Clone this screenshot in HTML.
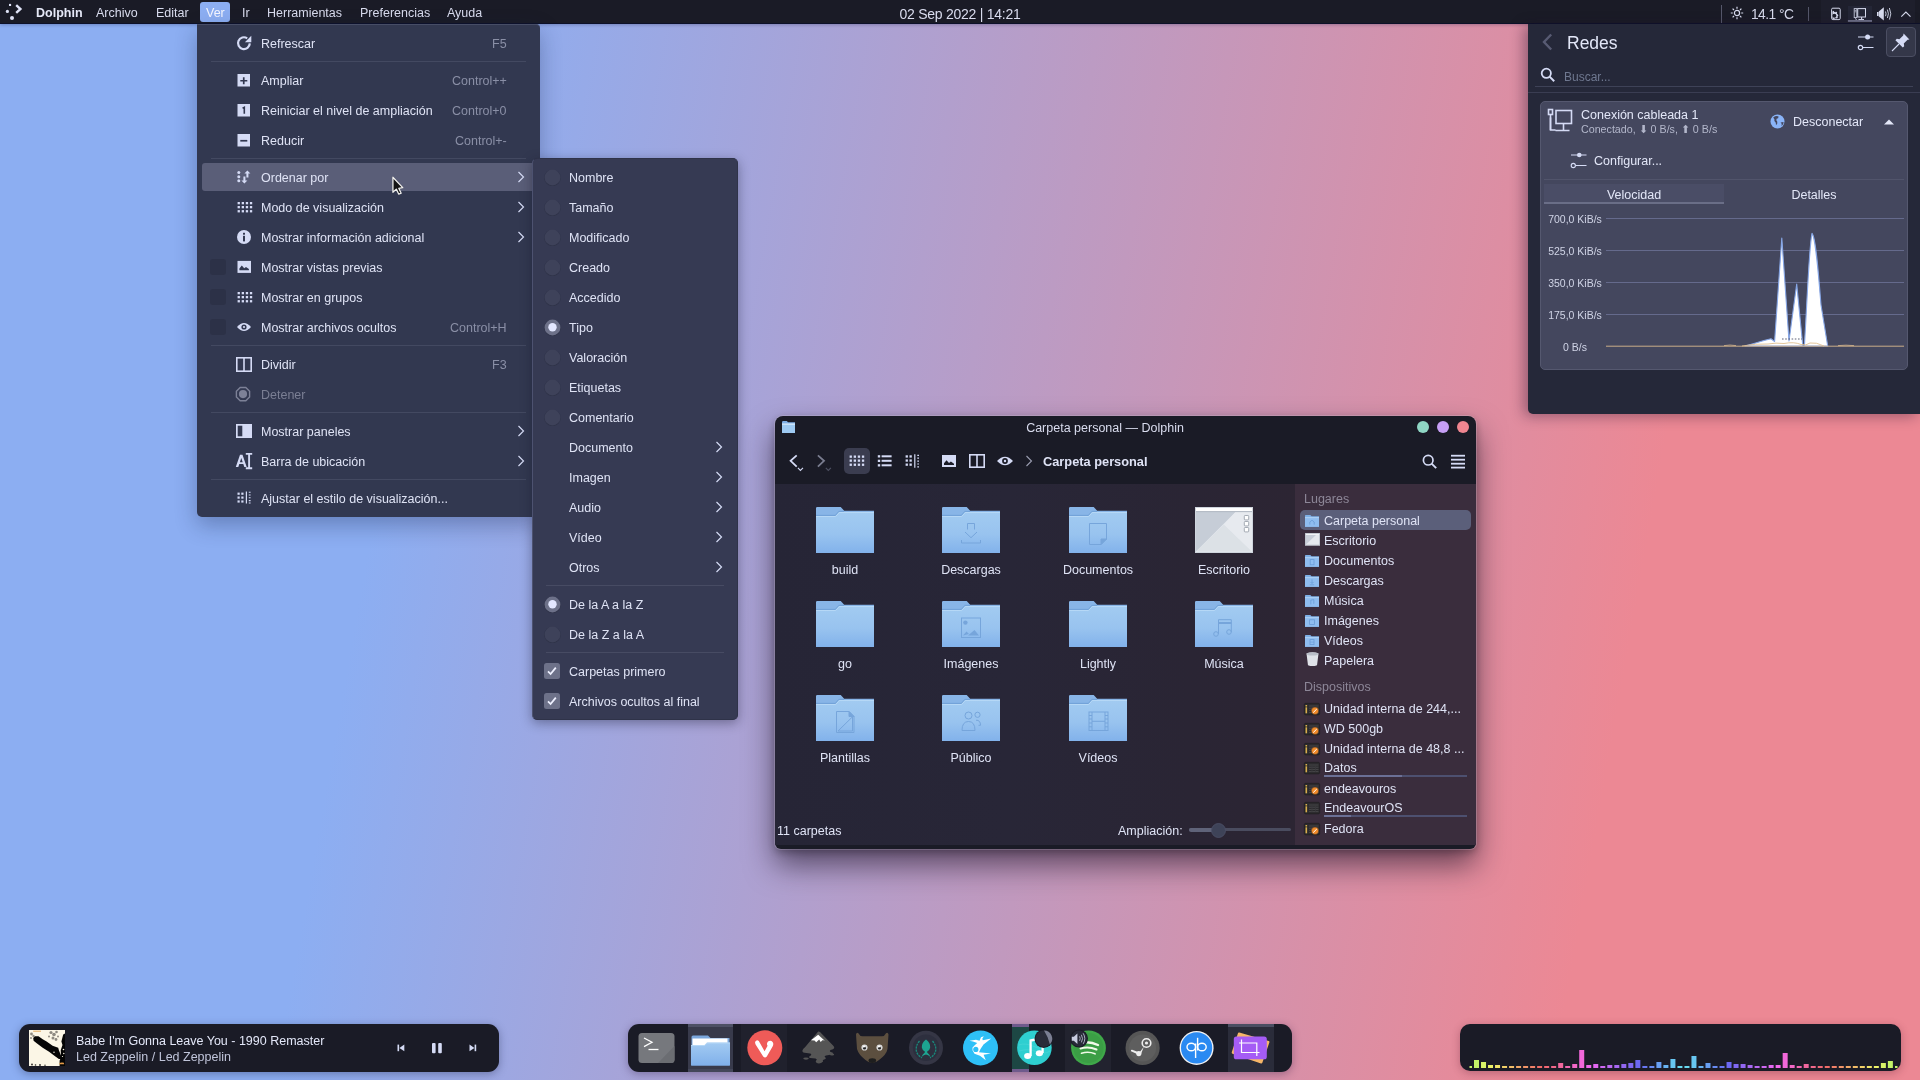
<!DOCTYPE html>
<html><head><meta charset="utf-8"><style>
html,body{margin:0;padding:0;width:1920px;height:1080px;overflow:hidden;}
body{position:relative;font-family:"Liberation Sans", sans-serif;background:linear-gradient(100deg,#8caef2 22%,#ec8894 82.6%);}
.t{position:absolute;white-space:nowrap;will-change:transform;}
svg{display:block;overflow:visible;}
</style></head><body>
<div style="position:absolute;left:0px;top:0px;width:1920px;height:23px;background:#1a1b26;border-bottom:1px solid #0d1129;box-shadow:0 1px 3px rgba(10,15,50,0.25);"></div>
<svg style="position:absolute;left:0px;top:0px;" width="26" height="24" viewBox="0 0 26 24">
<rect x="9" y="3.9" width="2.1" height="2.1" fill="#dfe3f7"/>
<circle cx="7.4" cy="11.4" r="1.6" fill="#dfe3f7"/>
<circle cx="12" cy="18" r="2" fill="#dfe3f7"/>
<path d="M16.2 5.2 L20.4 9 L16.2 12.8" fill="none" stroke="#dfe3f7" stroke-width="2.4" stroke-linejoin="miter"/>
</svg>
<div class="t" style="left:35.50px;top:7.12px;font-size:12.5px;line-height:12.5px;color:#e6e9f8;font-weight:700;">Dolphin</div>
<div class="t" style="left:96.00px;top:7.12px;font-size:12.5px;line-height:12.5px;color:#d9dcee;">Archivo</div>
<div class="t" style="left:155.50px;top:7.12px;font-size:12.5px;line-height:12.5px;color:#d9dcee;">Editar</div>
<div style="position:absolute;left:200px;top:2px;width:30px;height:20px;background:#8caef2;border-radius:3px;"></div>
<div class="t" style="left:205.50px;top:7.12px;font-size:12.5px;line-height:12.5px;color:#f4f6ff;">Ver</div>
<div class="t" style="left:241.50px;top:7.12px;font-size:12.5px;line-height:12.5px;color:#d9dcee;">Ir</div>
<div class="t" style="left:266.50px;top:7.12px;font-size:12.5px;line-height:12.5px;color:#d9dcee;">Herramientas</div>
<div class="t" style="left:360.00px;top:7.12px;font-size:12.5px;line-height:12.5px;color:#d9dcee;">Preferencias</div>
<div class="t" style="left:446.50px;top:7.12px;font-size:12.5px;line-height:12.5px;color:#d9dcee;">Ayuda</div>
<div class="t" style="left:959.50px;transform:translateX(-50%);top:7.15px;font-size:14px;line-height:14px;color:#d9dcee;letter-spacing:-0.25px;">02 Sep 2022 | 14:21</div>
<div style="position:absolute;left:1721px;top:5px;width:1px;height:18px;background:#55576a;"></div>
<svg style="position:absolute;left:1730px;top:6px;" width="14" height="14" viewBox="0 0 14 14"><g stroke="#d8dcef" stroke-width="1.2" fill="none"><circle cx="7" cy="7" r="2.6"/>
<path d="M7 0.8v2M7 11.2v2M0.8 7h2M11.2 7h2M2.6 2.6l1.4 1.4M10 10l1.4 1.4M2.6 11.4l1.4-1.4M10 4l1.4-1.4"/></g></svg>
<div class="t" style="left:1751.00px;top:8.12px;font-size:13.8px;line-height:13.8px;color:#d9dcee;letter-spacing:-0.55px;">14.1 °C</div>
<div style="position:absolute;left:1808px;top:7px;width:1px;height:14px;background:#55576a;"></div>
<div style="position:absolute;left:1821px;top:0px;width:94px;height:23px;background:#1e1f2c;"></div>
<svg style="position:absolute;left:1820px;top:0px;" width="100" height="24" viewBox="0 0 100 24"><rect x="11.6" y="8.2" width="8.6" height="11.4" rx="1.2" fill="none" stroke="#d8dcef" stroke-width="1"/>
<path d="M12.4 11.5 L13.6 10.8 L14.4 12 L15.6 12.2 L16 11.4 L17.2 12.6 L16.8 13.6 L17.8 14.6 L18.4 15.6 L17.6 16.6 L17.8 18 L16.6 18.6 L15.4 18.2 L14 19 L12.4 19 Z" fill="#d8dcef"/><circle cx="14.4" cy="15.8" r="2" fill="#1c1d29"/>
<rect x="27.9" y="6" width="24.1" height="15.9" fill="#242636"/>
<rect x="27.9" y="20" width="24.1" height="1.9" fill="#6d7088"/>
<rect x="37.7" y="8.6" width="7.8" height="8.4" fill="none" stroke="#d8dcef" stroke-width="1"/>
<rect x="34.2" y="8.6" width="2.6" height="9" fill="none" stroke="#c8ccdf" stroke-width="0.9"/><path d="M34.8 10.4h1.4M34.8 11.8h1.4" stroke="#c8ccdf" stroke-width="0.7"/>
<path d="M41.6 17 V19 M38.5 19.5 H44" stroke="#d8dcef" stroke-width="1.2"/><path d="M35.5 17.6 V19.2 L37 19.5" stroke="#aeb2c6" stroke-width="0.9" fill="none"/>
<path d="M57 12 H58.6 V16 H57Z" fill="#d8dcef"/><path d="M58.8 11.6 L63.8 7.2 V20.6 L58.8 16.4Z" fill="#d8dcef"/>
<path d="M65.5 11.5 Q66.6 13.8 65.5 16.2 M67.4 9.6 Q69.4 13.8 67.4 18 M69.4 8 Q72.2 13.8 69.4 19.6" fill="none" stroke="#d8dcef" stroke-width="0.9"/>
<path d="M81.3 16.7 L85.9 12.1 L90.5 16.7" fill="none" stroke="#d8dcef" stroke-width="1.1"/>
</svg>
<div style="position:absolute;left:197px;top:24px;width:343px;height:493px;background:#323850;border-radius:0 4px 5px 5px;box-shadow:0 8px 22px rgba(20,30,70,0.32);border-top:1px solid #474d66;box-sizing:border-box;"></div>
<svg style="position:absolute;left:237px;top:36px;" width="16" height="15" viewBox="0 0 16 15"><path d="M12.8 7.4 A5.9 5.9 0 1 1 10.2 2.3" fill="none" stroke="#d5dbf5" stroke-width="2.2"/><path d="M14.3 -0.2 L14.3 6.2 L7.9 6.2Z" fill="#d5dbf5"/></svg>
<div class="t" style="left:261.00px;top:37.82px;font-size:12.5px;line-height:12.5px;color:#dfe3f5;">Refrescar</div>
<div class="t" style="right:1413.50px;top:37.82px;font-size:12.5px;line-height:12.5px;color:#8a8fa6;">F5</div>
<div style="position:absolute;left:211px;top:61px;width:315px;height:1px;background:#434961;"></div>
<svg style="position:absolute;left:237px;top:73px;" width="16" height="15" viewBox="0 0 16 15"><rect x="0.5" y="1" width="12.5" height="12.5" fill="#d5dbf5"/><path d="M6.75 4.2v7M3.3 7.75h7" stroke="#323850" stroke-width="1.7"/></svg>
<div class="t" style="left:261.00px;top:74.82px;font-size:12.5px;line-height:12.5px;color:#dfe3f5;">Ampliar</div>
<div class="t" style="right:1413.50px;top:74.82px;font-size:12.5px;line-height:12.5px;color:#8a8fa6;">Control++</div>
<svg style="position:absolute;left:237px;top:103px;" width="16" height="15" viewBox="0 0 16 15"><rect x="0.5" y="1" width="12.5" height="12.5" fill="#d5dbf5"/><path d="M5.6 5.2 L7.3 4.3 L7.3 10.8" fill="none" stroke="#323850" stroke-width="1.6"/></svg>
<div class="t" style="left:261.00px;top:104.82px;font-size:12.5px;line-height:12.5px;color:#dfe3f5;">Reiniciar el nivel de ampliación</div>
<div class="t" style="right:1413.50px;top:104.82px;font-size:12.5px;line-height:12.5px;color:#8a8fa6;">Control+0</div>
<svg style="position:absolute;left:237px;top:133px;" width="16" height="15" viewBox="0 0 16 15"><rect x="0.5" y="1" width="12.5" height="12.5" fill="#d5dbf5"/><path d="M3.3 7.75h7" stroke="#323850" stroke-width="1.7"/></svg>
<div class="t" style="left:261.00px;top:134.82px;font-size:12.5px;line-height:12.5px;color:#dfe3f5;">Reducir</div>
<div class="t" style="right:1413.50px;top:134.82px;font-size:12.5px;line-height:12.5px;color:#8a8fa6;">Control+-</div>
<div style="position:absolute;left:211px;top:158px;width:315px;height:1px;background:#434961;"></div>
<div style="position:absolute;left:202px;top:163px;width:335px;height:28px;background:#5a5e78;border-radius:3px;"></div>
<svg style="position:absolute;left:237px;top:170px;" width="16" height="15" viewBox="0 0 16 15"><circle cx="1.8" cy="2.6" r="1.5" fill="#d5dbf5"/><circle cx="1.8" cy="6.7" r="1.5" fill="#d5dbf5"/><circle cx="1.8" cy="10.8" r="1.5" fill="#d5dbf5"/><path d="M10.4 0.4 L13.4 3.6 L11.4 3.6 L11.4 7.4 L9.4 7.4 L9.4 3.6 L7.4 3.6Z" fill="#d5dbf5"/><path d="M7.4 13.6 L4.4 10.4 L6.4 10.4 L6.4 6.6 L8.4 6.6 L8.4 10.4 L10.4 10.4Z" fill="#d5dbf5"/></svg>
<div class="t" style="left:261.00px;top:171.82px;font-size:12.5px;line-height:12.5px;color:#dfe3f5;">Ordenar por</div>
<svg style="position:absolute;left:517px;top:171px;" width="8" height="12" viewBox="0 0 8 12"><path d="M1.5 1 L6.5 6 L1.5 11" fill="none" stroke="#d5dbf5" stroke-width="1.2"/></svg>
<svg style="position:absolute;left:237px;top:200px;" width="16" height="15" viewBox="0 0 16 15"><rect x="0.6" y="2.0" width="2.3" height="2.3" fill="#d5dbf5"/><rect x="0.6" y="6.0" width="2.3" height="2.3" fill="#d5dbf5"/><rect x="0.6" y="10.1" width="2.3" height="2.3" fill="#d5dbf5"/><rect x="4.7" y="2.0" width="2.3" height="2.3" fill="#d5dbf5"/><rect x="4.7" y="6.0" width="2.3" height="2.3" fill="#d5dbf5"/><rect x="4.7" y="10.1" width="2.3" height="2.3" fill="#d5dbf5"/><rect x="8.8" y="2.0" width="2.3" height="2.3" fill="#d5dbf5"/><rect x="8.8" y="6.0" width="2.3" height="2.3" fill="#d5dbf5"/><rect x="8.8" y="10.1" width="2.3" height="2.3" fill="#d5dbf5"/><rect x="12.9" y="2.0" width="2.3" height="2.3" fill="#d5dbf5"/><rect x="12.9" y="6.0" width="2.3" height="2.3" fill="#d5dbf5"/><rect x="12.9" y="10.1" width="2.3" height="2.3" fill="#d5dbf5"/></svg>
<div class="t" style="left:261.00px;top:201.82px;font-size:12.5px;line-height:12.5px;color:#dfe3f5;">Modo de visualización</div>
<svg style="position:absolute;left:517px;top:201px;" width="8" height="12" viewBox="0 0 8 12"><path d="M1.5 1 L6.5 6 L1.5 11" fill="none" stroke="#d5dbf5" stroke-width="1.2"/></svg>
<svg style="position:absolute;left:237px;top:230px;" width="16" height="15" viewBox="0 0 16 15"><circle cx="7" cy="7" r="7" fill="#d5dbf5"/><rect x="6" y="5.8" width="2" height="5.6" fill="#323850"/><rect x="6" y="2.8" width="2" height="1.9" fill="#323850"/></svg>
<div class="t" style="left:261.00px;top:231.82px;font-size:12.5px;line-height:12.5px;color:#dfe3f5;">Mostrar información adicional</div>
<svg style="position:absolute;left:517px;top:231px;" width="8" height="12" viewBox="0 0 8 12"><path d="M1.5 1 L6.5 6 L1.5 11" fill="none" stroke="#d5dbf5" stroke-width="1.2"/></svg>
<div style="position:absolute;left:210px;top:259px;width:16px;height:16px;background:#2c3147;border-radius:3px;"></div>
<svg style="position:absolute;left:237px;top:260px;" width="16" height="15" viewBox="0 0 16 15"><rect x="0.5" y="0.9" width="13.5" height="12" fill="#d5dbf5"/><path d="M2.4 10.3 L2.4 8.4 L4.8 5.6 L7.2 8.2 L9 6.9 L11.9 9.1 L11.9 10.3Z" fill="#323850"/></svg>
<div class="t" style="left:261.00px;top:261.82px;font-size:12.5px;line-height:12.5px;color:#dfe3f5;">Mostrar vistas previas</div>
<div style="position:absolute;left:210px;top:289px;width:16px;height:16px;background:#2c3147;border-radius:3px;"></div>
<svg style="position:absolute;left:237px;top:290px;" width="16" height="15" viewBox="0 0 16 15"><rect x="0.6" y="2.0" width="2.3" height="2.3" fill="#d5dbf5"/><rect x="0.6" y="6.0" width="2.3" height="2.3" fill="#d5dbf5"/><rect x="0.6" y="10.1" width="2.3" height="2.3" fill="#d5dbf5"/><rect x="4.7" y="2.0" width="2.3" height="2.3" fill="#d5dbf5"/><rect x="4.7" y="6.0" width="2.3" height="2.3" fill="#d5dbf5"/><rect x="4.7" y="10.1" width="2.3" height="2.3" fill="#d5dbf5"/><rect x="8.8" y="2.0" width="2.3" height="2.3" fill="#d5dbf5"/><rect x="8.8" y="6.0" width="2.3" height="2.3" fill="#d5dbf5"/><rect x="8.8" y="10.1" width="2.3" height="2.3" fill="#d5dbf5"/><rect x="12.9" y="2.0" width="2.3" height="2.3" fill="#d5dbf5"/><rect x="12.9" y="6.0" width="2.3" height="2.3" fill="#d5dbf5"/><rect x="12.9" y="10.1" width="2.3" height="2.3" fill="#d5dbf5"/></svg>
<div class="t" style="left:261.00px;top:291.82px;font-size:12.5px;line-height:12.5px;color:#dfe3f5;">Mostrar en grupos</div>
<div style="position:absolute;left:210px;top:319px;width:16px;height:16px;background:#2c3147;border-radius:3px;"></div>
<svg style="position:absolute;left:237px;top:320px;" width="16" height="15" viewBox="0 0 16 15"><path d="M0 7 Q7 -1 14 7 Q7 15 0 7Z" fill="#d5dbf5"/><circle cx="7" cy="7" r="2.6" fill="#323850"/><circle cx="7" cy="7" r="1.1" fill="#d5dbf5"/></svg>
<div class="t" style="left:261.00px;top:321.82px;font-size:12.5px;line-height:12.5px;color:#dfe3f5;">Mostrar archivos ocultos</div>
<div class="t" style="right:1413.50px;top:321.82px;font-size:12.5px;line-height:12.5px;color:#8a8fa6;">Control+H</div>
<div style="position:absolute;left:211px;top:345px;width:315px;height:1px;background:#434961;"></div>
<svg style="position:absolute;left:236px;top:357px;" width="16" height="15" viewBox="0 0 16 15"><rect x="0.8" y="0.8" width="14.4" height="13.4" fill="none" stroke="#d5dbf5" stroke-width="1.6"/><path d="M8 0.8v13.4" stroke="#d5dbf5" stroke-width="1.6"/></svg>
<div class="t" style="left:261.00px;top:358.82px;font-size:12.5px;line-height:12.5px;color:#dfe3f5;">Dividir</div>
<div class="t" style="right:1413.50px;top:358.82px;font-size:12.5px;line-height:12.5px;color:#8a8fa6;">F3</div>
<svg style="position:absolute;left:236px;top:387px;" width="16" height="15" viewBox="0 0 16 15"><path d="M4.2 0.5h5.6l3.8 3.8v5.6l-3.8 3.8H4.2L0.4 9.9V4.3Z" fill="none" stroke="#7d8197" stroke-width="1.4"/><circle cx="7" cy="7.1" r="4.1" fill="#7d8197"/></svg>
<div class="t" style="left:261.00px;top:388.82px;font-size:12.5px;line-height:12.5px;color:#7b7f94;">Detener</div>
<div style="position:absolute;left:211px;top:412px;width:315px;height:1px;background:#434961;"></div>
<svg style="position:absolute;left:236px;top:424px;" width="16" height="15" viewBox="0 0 16 15"><rect x="0" y="0" width="16" height="14" fill="#d5dbf5"/><rect x="1.7" y="1.7" width="4.6" height="10.6" fill="#323850"/></svg>
<div class="t" style="left:261.00px;top:425.82px;font-size:12.5px;line-height:12.5px;color:#dfe3f5;">Mostrar paneles</div>
<svg style="position:absolute;left:517px;top:425px;" width="8" height="12" viewBox="0 0 8 12"><path d="M1.5 1 L6.5 6 L1.5 11" fill="none" stroke="#d5dbf5" stroke-width="1.2"/></svg>
<svg style="position:absolute;left:236px;top:454px;" width="16" height="15" viewBox="0 0 16 15"><path d="M-0.2 13 L4 0.8 H6.5 L10.7 13 H8.3 L7.3 10.1 H3.3 L2.3 13Z M3.9 8.2 H6.7 L5.3 4.1Z" fill="#d5dbf5" fill-rule="evenodd"/><path d="M9.8 -0.1h6.4M13.1 -0.1v14.3M9.8 14.2h6.4" stroke="#d5dbf5" stroke-width="1.9" fill="none"/></svg>
<div class="t" style="left:261.00px;top:455.82px;font-size:12.5px;line-height:12.5px;color:#dfe3f5;">Barra de ubicación</div>
<svg style="position:absolute;left:517px;top:455px;" width="8" height="12" viewBox="0 0 8 12"><path d="M1.5 1 L6.5 6 L1.5 11" fill="none" stroke="#d5dbf5" stroke-width="1.2"/></svg>
<div style="position:absolute;left:211px;top:479px;width:315px;height:1px;background:#434961;"></div>
<svg style="position:absolute;left:237px;top:491px;" width="16" height="15" viewBox="0 0 16 15"><rect x="0.5" y="1.6" width="2.2" height="2.2" fill="#d5dbf5"/><rect x="0.5" y="5.5" width="2.2" height="2.2" fill="#d5dbf5"/><rect x="0.5" y="9.4" width="2.2" height="2.2" fill="#d5dbf5"/><rect x="4.3" y="1.6" width="2.2" height="2.2" fill="#d5dbf5"/><rect x="4.3" y="5.5" width="2.2" height="2.2" fill="#d5dbf5"/><rect x="4.3" y="9.4" width="2.2" height="2.2" fill="#d5dbf5"/><path d="M9.4 0.6v12" stroke="#d5dbf5" stroke-width="1.2"/><path d="M11.8 1.2h1.8M11.8 4h1.8M11.8 6.8h1.8M11.8 9.6h1.8M11.8 12h1.8" stroke="#d5dbf5" stroke-width="1.1"/></svg>
<div class="t" style="left:261.00px;top:492.82px;font-size:12.5px;line-height:12.5px;color:#dfe3f5;">Ajustar el estilo de visualización...</div>
<svg style="position:absolute;left:391px;top:176px;" width="14" height="20" viewBox="0 0 14 20"><path d="M1.9 1.3 L1.9 16.3 L5.3 13.1 L7.8 18.2 L10.2 17.2 L7.8 12.3 L11.8 11.6 Z" fill="#151515" stroke="#f2f2f2" stroke-width="1.3" stroke-linejoin="round" style="filter:drop-shadow(0 0.5px 0.6px rgba(0,0,0,0.5))"/></svg>
<div style="position:absolute;left:532px;top:158px;width:206px;height:562px;background:#363a53;border-radius:5px;box-shadow:0 3px 12px rgba(20,20,40,0.4);border:1px solid #2f3349;border-left-color:#4d5270;box-sizing:border-box;"></div>
<svg style="position:absolute;left:543px;top:168px;" width="19" height="19" viewBox="0 0 19 19"><circle cx="9.5" cy="9.9" r="8.2" fill="#2a2d40" opacity="0.6"/><circle cx="9.5" cy="9.5" r="7.9" fill="#3e425a"/></svg>
<div class="t" style="left:569.00px;top:171.82px;font-size:12.5px;line-height:12.5px;color:#dfe3f5;">Nombre</div>
<svg style="position:absolute;left:543px;top:198px;" width="19" height="19" viewBox="0 0 19 19"><circle cx="9.5" cy="9.9" r="8.2" fill="#2a2d40" opacity="0.6"/><circle cx="9.5" cy="9.5" r="7.9" fill="#3e425a"/></svg>
<div class="t" style="left:569.00px;top:201.82px;font-size:12.5px;line-height:12.5px;color:#dfe3f5;">Tamaño</div>
<svg style="position:absolute;left:543px;top:228px;" width="19" height="19" viewBox="0 0 19 19"><circle cx="9.5" cy="9.9" r="8.2" fill="#2a2d40" opacity="0.6"/><circle cx="9.5" cy="9.5" r="7.9" fill="#3e425a"/></svg>
<div class="t" style="left:569.00px;top:231.82px;font-size:12.5px;line-height:12.5px;color:#dfe3f5;">Modificado</div>
<svg style="position:absolute;left:543px;top:258px;" width="19" height="19" viewBox="0 0 19 19"><circle cx="9.5" cy="9.9" r="8.2" fill="#2a2d40" opacity="0.6"/><circle cx="9.5" cy="9.5" r="7.9" fill="#3e425a"/></svg>
<div class="t" style="left:569.00px;top:261.82px;font-size:12.5px;line-height:12.5px;color:#dfe3f5;">Creado</div>
<svg style="position:absolute;left:543px;top:288px;" width="19" height="19" viewBox="0 0 19 19"><circle cx="9.5" cy="9.9" r="8.2" fill="#2a2d40" opacity="0.6"/><circle cx="9.5" cy="9.5" r="7.9" fill="#3e425a"/></svg>
<div class="t" style="left:569.00px;top:291.82px;font-size:12.5px;line-height:12.5px;color:#dfe3f5;">Accedido</div>
<svg style="position:absolute;left:543px;top:318px;" width="19" height="19" viewBox="0 0 19 19"><circle cx="9.5" cy="9.9" r="8.2" fill="#2a2d40" opacity="0.6"/><circle cx="9.5" cy="9.5" r="7.9" fill="#6d7189"/><circle cx="9.5" cy="9.3" r="4.2" fill="#e3e7ff"/></svg>
<div class="t" style="left:569.00px;top:321.82px;font-size:12.5px;line-height:12.5px;color:#dfe3f5;">Tipo</div>
<svg style="position:absolute;left:543px;top:348px;" width="19" height="19" viewBox="0 0 19 19"><circle cx="9.5" cy="9.9" r="8.2" fill="#2a2d40" opacity="0.6"/><circle cx="9.5" cy="9.5" r="7.9" fill="#3e425a"/></svg>
<div class="t" style="left:569.00px;top:351.82px;font-size:12.5px;line-height:12.5px;color:#dfe3f5;">Valoración</div>
<svg style="position:absolute;left:543px;top:378px;" width="19" height="19" viewBox="0 0 19 19"><circle cx="9.5" cy="9.9" r="8.2" fill="#2a2d40" opacity="0.6"/><circle cx="9.5" cy="9.5" r="7.9" fill="#3e425a"/></svg>
<div class="t" style="left:569.00px;top:381.82px;font-size:12.5px;line-height:12.5px;color:#dfe3f5;">Etiquetas</div>
<svg style="position:absolute;left:543px;top:408px;" width="19" height="19" viewBox="0 0 19 19"><circle cx="9.5" cy="9.9" r="8.2" fill="#2a2d40" opacity="0.6"/><circle cx="9.5" cy="9.5" r="7.9" fill="#3e425a"/></svg>
<div class="t" style="left:569.00px;top:411.82px;font-size:12.5px;line-height:12.5px;color:#dfe3f5;">Comentario</div>
<div class="t" style="left:569.00px;top:441.82px;font-size:12.5px;line-height:12.5px;color:#dfe3f5;">Documento</div>
<svg style="position:absolute;left:715px;top:441px;" width="8" height="12" viewBox="0 0 8 12"><path d="M1.5 1 L6.5 6 L1.5 11" fill="none" stroke="#d5dbf5" stroke-width="1.2"/></svg>
<div class="t" style="left:569.00px;top:471.82px;font-size:12.5px;line-height:12.5px;color:#dfe3f5;">Imagen</div>
<svg style="position:absolute;left:715px;top:471px;" width="8" height="12" viewBox="0 0 8 12"><path d="M1.5 1 L6.5 6 L1.5 11" fill="none" stroke="#d5dbf5" stroke-width="1.2"/></svg>
<div class="t" style="left:569.00px;top:501.82px;font-size:12.5px;line-height:12.5px;color:#dfe3f5;">Audio</div>
<svg style="position:absolute;left:715px;top:501px;" width="8" height="12" viewBox="0 0 8 12"><path d="M1.5 1 L6.5 6 L1.5 11" fill="none" stroke="#d5dbf5" stroke-width="1.2"/></svg>
<div class="t" style="left:569.00px;top:531.82px;font-size:12.5px;line-height:12.5px;color:#dfe3f5;">Vídeo</div>
<svg style="position:absolute;left:715px;top:531px;" width="8" height="12" viewBox="0 0 8 12"><path d="M1.5 1 L6.5 6 L1.5 11" fill="none" stroke="#d5dbf5" stroke-width="1.2"/></svg>
<div class="t" style="left:569.00px;top:561.82px;font-size:12.5px;line-height:12.5px;color:#dfe3f5;">Otros</div>
<svg style="position:absolute;left:715px;top:561px;" width="8" height="12" viewBox="0 0 8 12"><path d="M1.5 1 L6.5 6 L1.5 11" fill="none" stroke="#d5dbf5" stroke-width="1.2"/></svg>
<div style="position:absolute;left:546px;top:585px;width:178px;height:1px;background:#474b63;"></div>
<svg style="position:absolute;left:543px;top:595px;" width="19" height="19" viewBox="0 0 19 19"><circle cx="9.5" cy="9.9" r="8.2" fill="#2a2d40" opacity="0.6"/><circle cx="9.5" cy="9.5" r="7.9" fill="#6d7189"/><circle cx="9.5" cy="9.3" r="4.2" fill="#e3e7ff"/></svg>
<div class="t" style="left:569.00px;top:598.82px;font-size:12.5px;line-height:12.5px;color:#dfe3f5;">De la A a la Z</div>
<svg style="position:absolute;left:543px;top:625px;" width="19" height="19" viewBox="0 0 19 19"><circle cx="9.5" cy="9.9" r="8.2" fill="#2a2d40" opacity="0.6"/><circle cx="9.5" cy="9.5" r="7.9" fill="#3e425a"/></svg>
<div class="t" style="left:569.00px;top:628.82px;font-size:12.5px;line-height:12.5px;color:#dfe3f5;">De la Z a la A</div>
<div style="position:absolute;left:546px;top:652px;width:178px;height:1px;background:#474b63;"></div>
<svg style="position:absolute;left:544px;top:663px;" width="16" height="16" viewBox="0 0 16 16"><rect x="0" y="0" width="16" height="16" rx="2.5" fill="#6d7189"/><path d="M4 8.3 L6.6 11 L11.8 4.6" fill="none" stroke="#eef0ff" stroke-width="1.8"/></svg>
<div class="t" style="left:569.00px;top:665.82px;font-size:12.5px;line-height:12.5px;color:#dfe3f5;">Carpetas primero</div>
<svg style="position:absolute;left:544px;top:693px;" width="16" height="16" viewBox="0 0 16 16"><rect x="0" y="0" width="16" height="16" rx="2.5" fill="#6d7189"/><path d="M4 8.3 L6.6 11 L11.8 4.6" fill="none" stroke="#eef0ff" stroke-width="1.8"/></svg>
<div class="t" style="left:569.00px;top:695.82px;font-size:12.5px;line-height:12.5px;color:#dfe3f5;">Archivos ocultos al final</div>
<div style="position:absolute;left:775px;top:416px;width:701px;height:433px;background:#1a1b26;border-radius:8px 8px 6px 6px;box-shadow:0 0 0 1px rgba(230,220,240,0.22),0 16px 30px rgba(25,15,35,0.6),0 3px 8px rgba(0,0,0,0.3);overflow:hidden;"><div style="position:absolute;left:0;top:68px;width:520px;height:361px;background:linear-gradient(90deg,#262536 0%,#282637 45%,#2a2534 80%,#2c2533 100%);"></div><div style="position:absolute;left:520px;top:68px;width:181px;height:361px;background:#3a2d3d;"></div></div>
<svg style="position:absolute;left:782px;top:421px;" width="13" height="12" viewBox="0 0 13 12"><path d="M0 1.2 Q0 0 1.2 0 H4.8 L6 1.3 H13 V12 H0Z" fill="#7fb0e6"/><rect x="0" y="2.6" width="13" height="9.4" fill="#9ecaf2"/><rect x="0" y="2.6" width="13" height="1" fill="#e8f2fc"/></svg>
<div class="t" style="left:1105.00px;transform:translateX(-50%);top:422.22px;font-size:12.5px;line-height:12.5px;color:#d9dcee;">Carpeta personal — Dolphin</div>
<svg style="position:absolute;left:1417px;top:421px;" width="12" height="12" viewBox="0 0 12 12"><circle cx="6" cy="6" r="6" fill="#8fd6c4"/></svg>
<svg style="position:absolute;left:1437px;top:421px;" width="12" height="12" viewBox="0 0 12 12"><circle cx="6" cy="6" r="6" fill="#c69ff5"/></svg>
<svg style="position:absolute;left:1457px;top:421px;" width="12" height="12" viewBox="0 0 12 12"><circle cx="6" cy="6" r="6" fill="#ef8590"/></svg>
<svg style="position:absolute;left:786px;top:452px;" width="20" height="21" viewBox="0 0 20 21"><path d="M10.7 3.4 L4.6 8.8 L10.7 14.7" fill="none" stroke="#d5dbf5" stroke-width="1.8"/><path d="M11.9 15.9 L14.4 18.5 L17 15.9" fill="none" stroke="#d5dbf5" stroke-width="1.1"/></svg>
<svg style="position:absolute;left:814px;top:452px;" width="20" height="21" viewBox="0 0 20 21"><path d="M3.9 3.4 L10 8.8 L3.9 14.7" fill="none" stroke="#7a7d90" stroke-width="1.8"/><path d="M11.8 15.9 L14.3 18.5 L16.9 15.9" fill="none" stroke="#4f5264" stroke-width="1.1"/></svg>
<div style="position:absolute;left:844px;top:448px;width:26px;height:26px;background:#3b3d50;border-radius:5px;"></div>
<svg style="position:absolute;left:849px;top:455px;" width="16" height="12" viewBox="0 0 16 12"><rect x="0.6" y="0.5" width="2.3" height="2.3" fill="#d5dbf5"/><rect x="0.6" y="4.5" width="2.3" height="2.3" fill="#d5dbf5"/><rect x="0.6" y="8.6" width="2.3" height="2.3" fill="#d5dbf5"/><rect x="4.7" y="0.5" width="2.3" height="2.3" fill="#d5dbf5"/><rect x="4.7" y="4.5" width="2.3" height="2.3" fill="#d5dbf5"/><rect x="4.7" y="8.6" width="2.3" height="2.3" fill="#d5dbf5"/><rect x="8.8" y="0.5" width="2.3" height="2.3" fill="#d5dbf5"/><rect x="8.8" y="4.5" width="2.3" height="2.3" fill="#d5dbf5"/><rect x="8.8" y="8.6" width="2.3" height="2.3" fill="#d5dbf5"/><rect x="12.9" y="0.5" width="2.3" height="2.3" fill="#d5dbf5"/><rect x="12.9" y="4.5" width="2.3" height="2.3" fill="#d5dbf5"/><rect x="12.9" y="8.6" width="2.3" height="2.3" fill="#d5dbf5"/></svg>
<svg style="position:absolute;left:877px;top:454px;" width="16" height="14" viewBox="0 0 16 14"><rect x="0.8" y="1.2" width="2.4" height="2.3" fill="#d5dbf5"/><rect x="0.8" y="5.7" width="2.4" height="2.3" fill="#d5dbf5"/><rect x="0.8" y="10.2" width="2.4" height="2.3" fill="#d5dbf5"/><rect x="4.6" y="1.3" width="10" height="2" fill="#d5dbf5"/><rect x="4.6" y="5.8" width="10" height="2" fill="#d5dbf5"/><rect x="4.6" y="10.3" width="10" height="2" fill="#d5dbf5"/></svg>
<svg style="position:absolute;left:905px;top:454px;" width="16" height="14" viewBox="0 0 16 14"><rect x="0.6" y="1.3" width="2.3" height="2.3" fill="#d5dbf5"/><rect x="0.6" y="5.4" width="2.3" height="2.3" fill="#d5dbf5"/><rect x="0.6" y="9.5" width="2.3" height="2.3" fill="#d5dbf5"/><rect x="4.5" y="1.3" width="2.3" height="2.3" fill="#d5dbf5"/><rect x="4.5" y="5.4" width="2.3" height="2.3" fill="#d5dbf5"/><rect x="4.5" y="9.5" width="2.3" height="2.3" fill="#d5dbf5"/><path d="M9.8 0.3v13.5" stroke="#d5dbf5" stroke-width="1.2"/><path d="M12.3 1.3h1.7M12.3 4.2h1.7M12.3 7.1h1.7M12.3 10h1.7M12.3 12.9h1.7" stroke="#d5dbf5" stroke-width="1.2"/></svg>
<svg style="position:absolute;left:942px;top:455px;" width="14" height="12" viewBox="0 0 14 12"><rect x="0" y="0" width="14" height="12" fill="#d5dbf5"/><path d="M2 10 L2 8.2 L4.5 5.2 L7 8 L8.9 6.6 L12 8.8 L12 10Z" fill="#1a1b26"/></svg>
<svg style="position:absolute;left:969px;top:454px;" width="16" height="14" viewBox="0 0 16 14"><rect x="0.8" y="0.8" width="14.4" height="12.4" fill="none" stroke="#d5dbf5" stroke-width="1.6"/><path d="M8 0.8v12.4" stroke="#d5dbf5" stroke-width="1.6"/></svg>
<svg style="position:absolute;left:997px;top:455px;" width="16" height="12" viewBox="0 0 16 12"><path d="M0 6 Q8 -2.5 16 6 Q8 14.5 0 6Z" fill="#d5dbf5"/><circle cx="8" cy="6" r="2.9" fill="#1a1b26"/><circle cx="8" cy="6" r="1.2" fill="#d5dbf5"/></svg>
<svg style="position:absolute;left:1025px;top:455px;" width="8" height="12" viewBox="0 0 8 12"><path d="M1.5 1 L6.5 6 L1.5 11" fill="none" stroke="#9a9db0" stroke-width="1.1"/></svg>
<div class="t" style="left:1042.50px;top:456.26px;font-size:12.8px;line-height:12.8px;color:#dfe3f5;font-weight:700;">Carpeta personal</div>
<svg style="position:absolute;left:1422px;top:454px;" width="16" height="16" viewBox="0 0 16 16"><circle cx="6.2" cy="6.2" r="4.8" fill="none" stroke="#d5dbf5" stroke-width="1.7"/><path d="M9.6 9.6 L14.2 14.2" stroke="#d5dbf5" stroke-width="1.9"/></svg>
<svg style="position:absolute;left:1451px;top:454px;" width="15" height="15" viewBox="0 0 15 15"><rect x="0" y="0.8" width="14" height="1.8" fill="#d5dbf5"/><rect x="0" y="4.8" width="14" height="1.8" fill="#d5dbf5"/><rect x="0" y="8.8" width="14" height="1.8" fill="#d5dbf5"/><rect x="0" y="12.7" width="14" height="1.8" fill="#d5dbf5"/></svg>
<svg style="position:absolute;left:816px;top:507px;" width="58" height="47" viewBox="0 0 58 47"><defs><linearGradient id="fg816_507" x1="0" y1="0" x2="0" y2="1"><stop offset="0" stop-color="#a2cbf1"/><stop offset="0.55" stop-color="#98c3ef"/><stop offset="1" stop-color="#82b2eb"/></linearGradient></defs>
<path d="M0 1.2 Q0 0 1.2 0 L24.7 0 L28.2 3.8 L58 3.8 L58 46 L0 46Z" fill="#88b5e7"/>
<path d="M0 9 L19.5 9 L23 5 L58 5 L58 46 L0 46Z" fill="url(#fg816_507)"/>
<path d="M0 9.5 L19.7 9.5 L23.2 5.5 L58 5.5" fill="none" stroke="#b6d8f6" stroke-width="1"/>
<path d="M0 8.4 L19.3 8.4 L22.8 4.4 L28 4.4" fill="none" stroke="#6e9fd6" stroke-width="0.9"/>
<g fill="none" stroke="#76a5db" stroke-width="1"></g></svg>
<div class="t" style="left:845.00px;transform:translateX(-50%);top:564.22px;font-size:12.5px;line-height:12.5px;color:#dfe3f5;">build</div>
<svg style="position:absolute;left:942px;top:507px;" width="58" height="47" viewBox="0 0 58 47"><defs><linearGradient id="fg942_507" x1="0" y1="0" x2="0" y2="1"><stop offset="0" stop-color="#a2cbf1"/><stop offset="0.55" stop-color="#98c3ef"/><stop offset="1" stop-color="#82b2eb"/></linearGradient></defs>
<path d="M0 1.2 Q0 0 1.2 0 L24.7 0 L28.2 3.8 L58 3.8 L58 46 L0 46Z" fill="#88b5e7"/>
<path d="M0 9 L19.5 9 L23 5 L58 5 L58 46 L0 46Z" fill="url(#fg942_507)"/>
<path d="M0 9.5 L19.7 9.5 L23.2 5.5 L58 5.5" fill="none" stroke="#b6d8f6" stroke-width="1"/>
<path d="M0 8.4 L19.3 8.4 L22.8 4.4 L28 4.4" fill="none" stroke="#6e9fd6" stroke-width="0.9"/>
<g fill="none" stroke="#76a5db" stroke-width="1"><path d="M25.5 22.5 V16.5 H32.5 V22.5"/><path d="M23 25 L29 30.7 L35 25"/><path d="M19.5 33 V36 H38.5 V33"/></g></svg>
<div class="t" style="left:971.00px;transform:translateX(-50%);top:564.22px;font-size:12.5px;line-height:12.5px;color:#dfe3f5;">Descargas</div>
<svg style="position:absolute;left:1069px;top:507px;" width="58" height="47" viewBox="0 0 58 47"><defs><linearGradient id="fg1069_507" x1="0" y1="0" x2="0" y2="1"><stop offset="0" stop-color="#a2cbf1"/><stop offset="0.55" stop-color="#98c3ef"/><stop offset="1" stop-color="#82b2eb"/></linearGradient></defs>
<path d="M0 1.2 Q0 0 1.2 0 L24.7 0 L28.2 3.8 L58 3.8 L58 46 L0 46Z" fill="#88b5e7"/>
<path d="M0 9 L19.5 9 L23 5 L58 5 L58 46 L0 46Z" fill="url(#fg1069_507)"/>
<path d="M0 9.5 L19.7 9.5 L23.2 5.5 L58 5.5" fill="none" stroke="#b6d8f6" stroke-width="1"/>
<path d="M0 8.4 L19.3 8.4 L22.8 4.4 L28 4.4" fill="none" stroke="#6e9fd6" stroke-width="0.9"/>
<g fill="none" stroke="#76a5db" stroke-width="1"><path d="M20.5 16.5 H37.5 V32 L32 37.5 H20.5Z"/><path d="M37.5 32 L32 37.5 V32Z" fill="#76a5db"/></g></svg>
<div class="t" style="left:1098.00px;transform:translateX(-50%);top:564.22px;font-size:12.5px;line-height:12.5px;color:#dfe3f5;">Documentos</div>
<svg style="position:absolute;left:1195px;top:507px;" width="58" height="46" viewBox="0 0 58 46"><rect x="0" y="0" width="58" height="46" fill="#e4e8ee"/>
<path d="M1 5 H40.5 L1 44.5Z" fill="#c6cdd7"/><path d="M1 44.5 L29 17.4 L57 44.5Z" fill="#dce1e6"/><path d="M40.5 5 H57 V44.5 L29 17.4Z" fill="#e7eaef"/>
<rect x="0" y="0" width="58" height="4.2" fill="#ffffff"/><rect x="0" y="4.2" width="58" height="0.9" fill="#a9b0bb"/>
<rect x="0.5" y="0.5" width="57" height="45" fill="none" stroke="#cfd5dd" stroke-width="1"/>
<g fill="#fff" stroke="#9aa0aa" stroke-width="0.9"><rect x="49.3" y="8.5" width="4.4" height="4.4" rx="0.8"/><rect x="49.3" y="14.5" width="4.4" height="4.4" rx="0.8"/><rect x="49.3" y="20.5" width="4.4" height="4.4" rx="0.8"/></g></svg>
<div class="t" style="left:1224.00px;transform:translateX(-50%);top:564.22px;font-size:12.5px;line-height:12.5px;color:#dfe3f5;">Escritorio</div>
<svg style="position:absolute;left:816px;top:601px;" width="58" height="47" viewBox="0 0 58 47"><defs><linearGradient id="fg816_601" x1="0" y1="0" x2="0" y2="1"><stop offset="0" stop-color="#a2cbf1"/><stop offset="0.55" stop-color="#98c3ef"/><stop offset="1" stop-color="#82b2eb"/></linearGradient></defs>
<path d="M0 1.2 Q0 0 1.2 0 L24.7 0 L28.2 3.8 L58 3.8 L58 46 L0 46Z" fill="#88b5e7"/>
<path d="M0 9 L19.5 9 L23 5 L58 5 L58 46 L0 46Z" fill="url(#fg816_601)"/>
<path d="M0 9.5 L19.7 9.5 L23.2 5.5 L58 5.5" fill="none" stroke="#b6d8f6" stroke-width="1"/>
<path d="M0 8.4 L19.3 8.4 L22.8 4.4 L28 4.4" fill="none" stroke="#6e9fd6" stroke-width="0.9"/>
<g fill="none" stroke="#76a5db" stroke-width="1"></g></svg>
<div class="t" style="left:845.00px;transform:translateX(-50%);top:658.22px;font-size:12.5px;line-height:12.5px;color:#dfe3f5;">go</div>
<svg style="position:absolute;left:942px;top:601px;" width="58" height="47" viewBox="0 0 58 47"><defs><linearGradient id="fg942_601" x1="0" y1="0" x2="0" y2="1"><stop offset="0" stop-color="#a2cbf1"/><stop offset="0.55" stop-color="#98c3ef"/><stop offset="1" stop-color="#82b2eb"/></linearGradient></defs>
<path d="M0 1.2 Q0 0 1.2 0 L24.7 0 L28.2 3.8 L58 3.8 L58 46 L0 46Z" fill="#88b5e7"/>
<path d="M0 9 L19.5 9 L23 5 L58 5 L58 46 L0 46Z" fill="url(#fg942_601)"/>
<path d="M0 9.5 L19.7 9.5 L23.2 5.5 L58 5.5" fill="none" stroke="#b6d8f6" stroke-width="1"/>
<path d="M0 8.4 L19.3 8.4 L22.8 4.4 L28 4.4" fill="none" stroke="#6e9fd6" stroke-width="0.9"/>
<g fill="none" stroke="#76a5db" stroke-width="1"><rect x="19.5" y="17" width="19" height="19.5"/><circle cx="23.4" cy="21.6" r="2.2" fill="#76a5db" stroke="none"/><path d="M26 34.5 L32.5 29 L37 34.5Z M21 34.5 L24.5 30.5 L27 33Z" fill="#76a5db" stroke="none"/></g></svg>
<div class="t" style="left:971.00px;transform:translateX(-50%);top:658.22px;font-size:12.5px;line-height:12.5px;color:#dfe3f5;">Imágenes</div>
<svg style="position:absolute;left:1069px;top:601px;" width="58" height="47" viewBox="0 0 58 47"><defs><linearGradient id="fg1069_601" x1="0" y1="0" x2="0" y2="1"><stop offset="0" stop-color="#a2cbf1"/><stop offset="0.55" stop-color="#98c3ef"/><stop offset="1" stop-color="#82b2eb"/></linearGradient></defs>
<path d="M0 1.2 Q0 0 1.2 0 L24.7 0 L28.2 3.8 L58 3.8 L58 46 L0 46Z" fill="#88b5e7"/>
<path d="M0 9 L19.5 9 L23 5 L58 5 L58 46 L0 46Z" fill="url(#fg1069_601)"/>
<path d="M0 9.5 L19.7 9.5 L23.2 5.5 L58 5.5" fill="none" stroke="#b6d8f6" stroke-width="1"/>
<path d="M0 8.4 L19.3 8.4 L22.8 4.4 L28 4.4" fill="none" stroke="#6e9fd6" stroke-width="0.9"/>
<g fill="none" stroke="#76a5db" stroke-width="1"></g></svg>
<div class="t" style="left:1098.00px;transform:translateX(-50%);top:658.22px;font-size:12.5px;line-height:12.5px;color:#dfe3f5;">Lightly</div>
<svg style="position:absolute;left:1195px;top:601px;" width="58" height="47" viewBox="0 0 58 47"><defs><linearGradient id="fg1195_601" x1="0" y1="0" x2="0" y2="1"><stop offset="0" stop-color="#a2cbf1"/><stop offset="0.55" stop-color="#98c3ef"/><stop offset="1" stop-color="#82b2eb"/></linearGradient></defs>
<path d="M0 1.2 Q0 0 1.2 0 L24.7 0 L28.2 3.8 L58 3.8 L58 46 L0 46Z" fill="#88b5e7"/>
<path d="M0 9 L19.5 9 L23 5 L58 5 L58 46 L0 46Z" fill="url(#fg1195_601)"/>
<path d="M0 9.5 L19.7 9.5 L23.2 5.5 L58 5.5" fill="none" stroke="#b6d8f6" stroke-width="1"/>
<path d="M0 8.4 L19.3 8.4 L22.8 4.4 L28 4.4" fill="none" stroke="#6e9fd6" stroke-width="0.9"/>
<g fill="none" stroke="#76a5db" stroke-width="1"><path d="M23.5 33 V18.7 H36.3 V31"/><path d="M23.5 22 H36.3" stroke-width="2"/><circle cx="21" cy="33" r="2.3"/><circle cx="34" cy="31" r="2.3"/></g></svg>
<div class="t" style="left:1224.00px;transform:translateX(-50%);top:658.22px;font-size:12.5px;line-height:12.5px;color:#dfe3f5;">Música</div>
<svg style="position:absolute;left:816px;top:695px;" width="58" height="47" viewBox="0 0 58 47"><defs><linearGradient id="fg816_695" x1="0" y1="0" x2="0" y2="1"><stop offset="0" stop-color="#a2cbf1"/><stop offset="0.55" stop-color="#98c3ef"/><stop offset="1" stop-color="#82b2eb"/></linearGradient></defs>
<path d="M0 1.2 Q0 0 1.2 0 L24.7 0 L28.2 3.8 L58 3.8 L58 46 L0 46Z" fill="#88b5e7"/>
<path d="M0 9 L19.5 9 L23 5 L58 5 L58 46 L0 46Z" fill="url(#fg816_695)"/>
<path d="M0 9.5 L19.7 9.5 L23.2 5.5 L58 5.5" fill="none" stroke="#b6d8f6" stroke-width="1"/>
<path d="M0 8.4 L19.3 8.4 L22.8 4.4 L28 4.4" fill="none" stroke="#6e9fd6" stroke-width="0.9"/>
<g fill="none" stroke="#76a5db" stroke-width="1"><path d="M20.5 16.5 H33 L38 21.5 V37.5 H20.5Z"/><path d="M22 36 L36.5 21.8 V36Z"/><path d="M33 16.5 L38 21.5 H33Z" fill="#76a5db"/></g></svg>
<div class="t" style="left:845.00px;transform:translateX(-50%);top:752.22px;font-size:12.5px;line-height:12.5px;color:#dfe3f5;">Plantillas</div>
<svg style="position:absolute;left:942px;top:695px;" width="58" height="47" viewBox="0 0 58 47"><defs><linearGradient id="fg942_695" x1="0" y1="0" x2="0" y2="1"><stop offset="0" stop-color="#a2cbf1"/><stop offset="0.55" stop-color="#98c3ef"/><stop offset="1" stop-color="#82b2eb"/></linearGradient></defs>
<path d="M0 1.2 Q0 0 1.2 0 L24.7 0 L28.2 3.8 L58 3.8 L58 46 L0 46Z" fill="#88b5e7"/>
<path d="M0 9 L19.5 9 L23 5 L58 5 L58 46 L0 46Z" fill="url(#fg942_695)"/>
<path d="M0 9.5 L19.7 9.5 L23.2 5.5 L58 5.5" fill="none" stroke="#b6d8f6" stroke-width="1"/>
<path d="M0 8.4 L19.3 8.4 L22.8 4.4 L28 4.4" fill="none" stroke="#6e9fd6" stroke-width="0.9"/>
<g fill="none" stroke="#76a5db" stroke-width="1"><circle cx="26.5" cy="20.5" r="3.5"/><path d="M20 35.5 Q20 26.5 26.5 26.5 Q33 26.5 33 35.5Z"/><circle cx="35.5" cy="19.8" r="2.6"/><path d="M34 25.2 Q38.5 25 38.5 30.3 H36.5"/></g></svg>
<div class="t" style="left:971.00px;transform:translateX(-50%);top:752.22px;font-size:12.5px;line-height:12.5px;color:#dfe3f5;">Público</div>
<svg style="position:absolute;left:1069px;top:695px;" width="58" height="47" viewBox="0 0 58 47"><defs><linearGradient id="fg1069_695" x1="0" y1="0" x2="0" y2="1"><stop offset="0" stop-color="#a2cbf1"/><stop offset="0.55" stop-color="#98c3ef"/><stop offset="1" stop-color="#82b2eb"/></linearGradient></defs>
<path d="M0 1.2 Q0 0 1.2 0 L24.7 0 L28.2 3.8 L58 3.8 L58 46 L0 46Z" fill="#88b5e7"/>
<path d="M0 9 L19.5 9 L23 5 L58 5 L58 46 L0 46Z" fill="url(#fg1069_695)"/>
<path d="M0 9.5 L19.7 9.5 L23.2 5.5 L58 5.5" fill="none" stroke="#b6d8f6" stroke-width="1"/>
<path d="M0 8.4 L19.3 8.4 L22.8 4.4 L28 4.4" fill="none" stroke="#6e9fd6" stroke-width="0.9"/>
<g fill="none" stroke="#76a5db" stroke-width="1"><rect x="20" y="17" width="19" height="18.5"/><path d="M23 17 V35.5 M36 17 V35.5 M23 26.3 H36"/><path d="M20 20.5 H23 M20 24 H23 M20 28 H23 M20 31.8 H23 M36 20.5 H39 M36 24 H39 M36 28 H39 M36 31.8 H39"/></g></svg>
<div class="t" style="left:1098.00px;transform:translateX(-50%);top:752.22px;font-size:12.5px;line-height:12.5px;color:#dfe3f5;">Vídeos</div>
<div class="t" style="left:777.00px;top:825.22px;font-size:12.5px;line-height:12.5px;color:#dfe3f5;">11 carpetas</div>
<div class="t" style="left:1117.50px;top:825.22px;font-size:12.5px;line-height:12.5px;color:#dfe3f5;">Ampliación:</div>
<div style="position:absolute;left:1189px;top:828px;width:102px;height:3px;background:#4a4c5f;border-radius:2px;"></div>
<div style="position:absolute;left:1189px;top:827.5px;width:30px;height:4px;background:#5f6379;border-radius:2px;"></div>
<svg style="position:absolute;left:1211px;top:823px;" width="15" height="15" viewBox="0 0 15 15"><circle cx="7.5" cy="7.5" r="7" fill="#3e4358" stroke="#4c5068" stroke-width="0.8"/></svg>
<div class="t" style="left:1303.50px;top:493.22px;font-size:12.5px;line-height:12.5px;color:#8d8798;">Lugares</div>
<div style="position:absolute;left:1300px;top:510px;width:171px;height:20px;background:#5b5f7a;border-radius:5px;"></div>
<svg style="position:absolute;left:1305px;top:515px;" width="15" height="12" viewBox="0 0 15 12"><path d="M0 0.8 Q0 0 0.8 0 H5.3 L6.5 1.3 H14 V11.8 H0Z" fill="#7fb0e6"/><rect x="0" y="2.3" width="14" height="9.5" fill="#8fbdf0"/><rect x="0" y="2.3" width="14" height="0.8" fill="#b8d8f7"/><path d="M4.8 9.6 V7 L7 5.2 L9.2 7 V9.6" fill="none" stroke="#6a9cd6" stroke-width="0.8"/></svg>
<div class="t" style="left:1324.00px;top:515.22px;font-size:12.5px;line-height:12.5px;color:#dfe3f5;">Carpeta personal</div>
<svg style="position:absolute;left:1305px;top:533px;" width="15" height="13" viewBox="0 0 15 13"><rect x="0" y="0" width="15" height="12.5" fill="#e6e9ee"/><path d="M0.7 11.8 L11 2 H0.7Z" fill="#c8ced8"/><rect x="0" y="0" width="15" height="1.5" fill="#fff"/><rect x="0.4" y="0.4" width="14.2" height="11.7" fill="none" stroke="#b8bec8" stroke-width="0.8"/></svg>
<div class="t" style="left:1324.00px;top:535.22px;font-size:12.5px;line-height:12.5px;color:#dfe3f5;">Escritorio</div>
<svg style="position:absolute;left:1305px;top:555px;" width="15" height="12" viewBox="0 0 15 12"><path d="M0 0.8 Q0 0 0.8 0 H5.3 L6.5 1.3 H14 V11.8 H0Z" fill="#7fb0e6"/><rect x="0" y="2.3" width="14" height="9.5" fill="#8fbdf0"/><rect x="0" y="2.3" width="14" height="0.8" fill="#b8d8f7"/><rect x="5.2" y="4.6" width="3.8" height="5.2" fill="none" stroke="#6a9cd6" stroke-width="0.8"/></svg>
<div class="t" style="left:1324.00px;top:555.22px;font-size:12.5px;line-height:12.5px;color:#dfe3f5;">Documentos</div>
<svg style="position:absolute;left:1305px;top:575px;" width="15" height="12" viewBox="0 0 15 12"><path d="M0 0.8 Q0 0 0.8 0 H5.3 L6.5 1.3 H14 V11.8 H0Z" fill="#7fb0e6"/><rect x="0" y="2.3" width="14" height="9.5" fill="#8fbdf0"/><rect x="0" y="2.3" width="14" height="0.8" fill="#b8d8f7"/><path d="M7 4.4 V8.4 M5.4 6.9 L7 8.5 L8.6 6.9 M4.8 9.8 H9.2" fill="none" stroke="#6a9cd6" stroke-width="0.8"/></svg>
<div class="t" style="left:1324.00px;top:575.22px;font-size:12.5px;line-height:12.5px;color:#dfe3f5;">Descargas</div>
<svg style="position:absolute;left:1305px;top:595px;" width="15" height="12" viewBox="0 0 15 12"><path d="M0 0.8 Q0 0 0.8 0 H5.3 L6.5 1.3 H14 V11.8 H0Z" fill="#7fb0e6"/><rect x="0" y="2.3" width="14" height="9.5" fill="#8fbdf0"/><rect x="0" y="2.3" width="14" height="0.8" fill="#b8d8f7"/><path d="M5.8 9.4 V5.2 L8.8 4.6 V8.8" fill="none" stroke="#6a9cd6" stroke-width="0.8"/></svg>
<div class="t" style="left:1324.00px;top:595.22px;font-size:12.5px;line-height:12.5px;color:#dfe3f5;">Música</div>
<svg style="position:absolute;left:1305px;top:615px;" width="15" height="12" viewBox="0 0 15 12"><path d="M0 0.8 Q0 0 0.8 0 H5.3 L6.5 1.3 H14 V11.8 H0Z" fill="#7fb0e6"/><rect x="0" y="2.3" width="14" height="9.5" fill="#8fbdf0"/><rect x="0" y="2.3" width="14" height="0.8" fill="#b8d8f7"/><rect x="4.6" y="4.8" width="4.8" height="4.6" fill="none" stroke="#6a9cd6" stroke-width="0.8"/></svg>
<div class="t" style="left:1324.00px;top:615.22px;font-size:12.5px;line-height:12.5px;color:#dfe3f5;">Imágenes</div>
<svg style="position:absolute;left:1305px;top:635px;" width="15" height="12" viewBox="0 0 15 12"><path d="M0 0.8 Q0 0 0.8 0 H5.3 L6.5 1.3 H14 V11.8 H0Z" fill="#7fb0e6"/><rect x="0" y="2.3" width="14" height="9.5" fill="#8fbdf0"/><rect x="0" y="2.3" width="14" height="0.8" fill="#b8d8f7"/><rect x="5" y="4.6" width="4" height="5" fill="none" stroke="#6a9cd6" stroke-width="0.8"/><path d="M5 7.1 H9" stroke="#6a9cd6" stroke-width="0.6"/></svg>
<div class="t" style="left:1324.00px;top:635.22px;font-size:12.5px;line-height:12.5px;color:#dfe3f5;">Vídeos</div>
<svg style="position:absolute;left:1306px;top:652px;" width="13" height="15" viewBox="0 0 13 15"><path d="M0.5 1.5 Q6.5 -0.8 12.5 1.5 L11 13.2 Q6.5 15 2 13.2Z" fill="#dfe2e8"/><ellipse cx="6.5" cy="2" rx="6" ry="1.6" fill="#b9bec8"/></svg>
<div class="t" style="left:1324.00px;top:655.22px;font-size:12.5px;line-height:12.5px;color:#dfe3f5;">Papelera</div>
<div class="t" style="left:1303.50px;top:681.22px;font-size:12.5px;line-height:12.5px;color:#8d8798;">Dispositivos</div>
<svg style="position:absolute;left:1304px;top:703px;" width="16" height="12" viewBox="0 0 16 12"><rect x="0.3" y="0.3" width="15.4" height="11.6" rx="1.5" fill="#2b2a2d" stroke="#1c1b1e" stroke-width="0.6"/><rect x="1.5" y="4.3" width="1.6" height="6" fill="#d8ae4c"/><rect x="1.5" y="2" width="1.6" height="1.5" fill="#d8ae4c"/><path d="M5 3 H14.5 M5 5.2 H14.5 M5 7.4 H14.5 M5 9.6 H14.5" stroke="#4a494c" stroke-width="0.9"/><path d="M8 2.5 V10 M11.5 2.5 V10" stroke="#3a393c" stroke-width="0.8"/><circle cx="11" cy="7.8" r="3.7" fill="#ef8a2a" stroke="#1c1b1e" stroke-width="0.4"/><path d="M9.2 9.6 L12.8 6" stroke="#fff" stroke-width="1"/></svg>
<div class="t" style="left:1324.00px;top:703.22px;font-size:12.5px;line-height:12.5px;color:#dfe3f5;">Unidad interna de 244,...</div>
<svg style="position:absolute;left:1304px;top:723px;" width="16" height="12" viewBox="0 0 16 12"><rect x="0.3" y="0.3" width="15.4" height="11.6" rx="1.5" fill="#2b2a2d" stroke="#1c1b1e" stroke-width="0.6"/><rect x="1.5" y="4.3" width="1.6" height="6" fill="#d8ae4c"/><rect x="1.5" y="2" width="1.6" height="1.5" fill="#d8ae4c"/><path d="M5 3 H14.5 M5 5.2 H14.5 M5 7.4 H14.5 M5 9.6 H14.5" stroke="#4a494c" stroke-width="0.9"/><path d="M8 2.5 V10 M11.5 2.5 V10" stroke="#3a393c" stroke-width="0.8"/><circle cx="11" cy="7.8" r="3.7" fill="#ef8a2a" stroke="#1c1b1e" stroke-width="0.4"/><path d="M9.2 9.6 L12.8 6" stroke="#fff" stroke-width="1"/></svg>
<div class="t" style="left:1324.00px;top:723.22px;font-size:12.5px;line-height:12.5px;color:#dfe3f5;">WD 500gb</div>
<svg style="position:absolute;left:1304px;top:743px;" width="16" height="12" viewBox="0 0 16 12"><rect x="0.3" y="0.3" width="15.4" height="11.6" rx="1.5" fill="#2b2a2d" stroke="#1c1b1e" stroke-width="0.6"/><rect x="1.5" y="4.3" width="1.6" height="6" fill="#d8ae4c"/><rect x="1.5" y="2" width="1.6" height="1.5" fill="#d8ae4c"/><path d="M5 3 H14.5 M5 5.2 H14.5 M5 7.4 H14.5 M5 9.6 H14.5" stroke="#4a494c" stroke-width="0.9"/><path d="M8 2.5 V10 M11.5 2.5 V10" stroke="#3a393c" stroke-width="0.8"/><circle cx="11" cy="7.8" r="3.7" fill="#ef8a2a" stroke="#1c1b1e" stroke-width="0.4"/><path d="M9.2 9.6 L12.8 6" stroke="#fff" stroke-width="1"/></svg>
<div class="t" style="left:1324.00px;top:743.22px;font-size:12.5px;line-height:12.5px;color:#dfe3f5;">Unidad interna de 48,8 ...</div>
<svg style="position:absolute;left:1304px;top:762px;" width="16" height="12" viewBox="0 0 16 12"><rect x="0.3" y="0.3" width="15.4" height="11.6" rx="1.5" fill="#2b2a2d" stroke="#1c1b1e" stroke-width="0.6"/><rect x="1.5" y="4.3" width="1.6" height="6" fill="#d8ae4c"/><rect x="1.5" y="2" width="1.6" height="1.5" fill="#d8ae4c"/><path d="M5 3 H14.5 M5 5.2 H14.5 M5 7.4 H14.5 M5 9.6 H14.5" stroke="#4a494c" stroke-width="0.9"/><path d="M8 2.5 V10 M11.5 2.5 V10" stroke="#3a393c" stroke-width="0.8"/></svg>
<div class="t" style="left:1324.00px;top:762.22px;font-size:12.5px;line-height:12.5px;color:#dfe3f5;">Datos</div>
<svg style="position:absolute;left:1304px;top:783px;" width="16" height="12" viewBox="0 0 16 12"><rect x="0.3" y="0.3" width="15.4" height="11.6" rx="1.5" fill="#2b2a2d" stroke="#1c1b1e" stroke-width="0.6"/><rect x="1.5" y="4.3" width="1.6" height="6" fill="#d8ae4c"/><rect x="1.5" y="2" width="1.6" height="1.5" fill="#d8ae4c"/><path d="M5 3 H14.5 M5 5.2 H14.5 M5 7.4 H14.5 M5 9.6 H14.5" stroke="#4a494c" stroke-width="0.9"/><path d="M8 2.5 V10 M11.5 2.5 V10" stroke="#3a393c" stroke-width="0.8"/><circle cx="11" cy="7.8" r="3.7" fill="#ef8a2a" stroke="#1c1b1e" stroke-width="0.4"/><path d="M9.2 9.6 L12.8 6" stroke="#fff" stroke-width="1"/></svg>
<div class="t" style="left:1324.00px;top:783.22px;font-size:12.5px;line-height:12.5px;color:#dfe3f5;">endeavouros</div>
<svg style="position:absolute;left:1304px;top:802px;" width="16" height="12" viewBox="0 0 16 12"><rect x="0.3" y="0.3" width="15.4" height="11.6" rx="1.5" fill="#2b2a2d" stroke="#1c1b1e" stroke-width="0.6"/><rect x="1.5" y="4.3" width="1.6" height="6" fill="#d8ae4c"/><rect x="1.5" y="2" width="1.6" height="1.5" fill="#d8ae4c"/><path d="M5 3 H14.5 M5 5.2 H14.5 M5 7.4 H14.5 M5 9.6 H14.5" stroke="#4a494c" stroke-width="0.9"/><path d="M8 2.5 V10 M11.5 2.5 V10" stroke="#3a393c" stroke-width="0.8"/></svg>
<div class="t" style="left:1324.00px;top:802.22px;font-size:12.5px;line-height:12.5px;color:#dfe3f5;">EndeavourOS</div>
<svg style="position:absolute;left:1304px;top:823px;" width="16" height="12" viewBox="0 0 16 12"><rect x="0.3" y="0.3" width="15.4" height="11.6" rx="1.5" fill="#2b2a2d" stroke="#1c1b1e" stroke-width="0.6"/><rect x="1.5" y="4.3" width="1.6" height="6" fill="#d8ae4c"/><rect x="1.5" y="2" width="1.6" height="1.5" fill="#d8ae4c"/><path d="M5 3 H14.5 M5 5.2 H14.5 M5 7.4 H14.5 M5 9.6 H14.5" stroke="#4a494c" stroke-width="0.9"/><path d="M8 2.5 V10 M11.5 2.5 V10" stroke="#3a393c" stroke-width="0.8"/><circle cx="11" cy="7.8" r="3.7" fill="#ef8a2a" stroke="#1c1b1e" stroke-width="0.4"/><path d="M9.2 9.6 L12.8 6" stroke="#fff" stroke-width="1"/></svg>
<div class="t" style="left:1324.00px;top:823.22px;font-size:12.5px;line-height:12.5px;color:#dfe3f5;">Fedora</div>
<div style="position:absolute;left:1324px;top:775px;width:143px;height:2px;background:#4d5070;"></div>
<div style="position:absolute;left:1324px;top:775px;width:78px;height:2px;background:#6b7096;"></div>
<div style="position:absolute;left:1324px;top:815px;width:143px;height:2px;background:#4d5070;"></div>
<div style="position:absolute;left:1324px;top:815px;width:27px;height:2px;background:#6b7096;"></div>
<div style="position:absolute;left:1528px;top:24px;width:392px;height:390px;background:#252839;border-radius:0 0 0 5px;box-shadow:-4px 2px 14px rgba(30,15,45,0.4);"></div>
<svg style="position:absolute;left:1541px;top:33px;" width="12" height="18" viewBox="0 0 12 18"><path d="M10.2 1.5 L3 9 L10.2 16.5" fill="none" stroke="#585b73" stroke-width="2.4"/></svg>
<div class="t" style="left:1567.00px;top:35.29px;font-size:17.5px;line-height:17.5px;color:#e3e7f8;">Redes</div>
<svg style="position:absolute;left:1857px;top:33px;" width="18" height="17" viewBox="0 0 18 17"><path d="M1 4h15.5M1 14.5h15.5" stroke="#d5dbf5" stroke-width="1.2"/><circle cx="10.6" cy="4" r="2.5" fill="#d5dbf5"/><circle cx="3.5" cy="14.5" r="2.2" fill="#252839" stroke="#d5dbf5" stroke-width="1.2"/></svg>
<div style="position:absolute;left:1886px;top:27px;width:30px;height:30px;background:#343749;border:1px solid #4b4e62;border-radius:4px;box-sizing:border-box;"></div>
<svg style="position:absolute;left:1891px;top:33px;" width="19" height="18" viewBox="0 0 19 18"><path d="M12.6 0.6 L18.4 6.4 L16.6 6.8 L12.8 10.6 L13.2 13.2 L11.8 14.6 L4.4 7.2 L5.8 5.8 L8.4 6.2 L12.2 2.4Z" fill="#d5dbf5"/><path d="M8 11 L1 18" stroke="#d5dbf5" stroke-width="1.1"/></svg>
<svg style="position:absolute;left:1540px;top:67px;" width="16" height="16" viewBox="0 0 16 16"><circle cx="6.3" cy="6.3" r="4.6" fill="none" stroke="#d5dbf5" stroke-width="1.8"/><path d="M9.6 9.6 L14.2 14.2" stroke="#d5dbf5" stroke-width="2"/></svg>
<div class="t" style="left:1564.00px;top:70.84px;font-size:12px;line-height:12px;color:#6f7890;">Buscar...</div>
<div style="position:absolute;left:1535px;top:86px;width:378px;height:1px;background:#3e4257;"></div>
<div style="position:absolute;left:1528px;top:92px;width:392px;height:1px;background:#3a3d52;"></div>
<div style="position:absolute;left:1540px;top:101px;width:368px;height:269px;background:#44475e;border:1px solid #55586f;border-radius:5px;box-sizing:border-box;"></div>
<svg style="position:absolute;left:1547px;top:108px;" width="26" height="26" viewBox="0 0 26 26"><g fill="none" stroke="#d5dbf5" stroke-width="1.6"><rect x="9" y="2.5" width="15.5" height="13"/><rect x="1.5" y="1.5" width="4" height="5"/><path d="M3.5 6.5V22h5M8.5 22.5h14M16.5 15.5v6.5"/><path d="M3.5 9.5V22"/></g></svg>
<div class="t" style="left:1581.00px;top:108.82px;font-size:12.5px;line-height:12.5px;color:#e3e7f8;">Conexión cableada 1</div>
<div class="t" style="left:1581.00px;top:123.74px;font-size:10.7px;line-height:10.7px;color:#b3b7cb;">Conectado, ⬇ 0 B/s, ⬆ 0 B/s</div>
<svg style="position:absolute;left:1770px;top:114px;" width="15" height="15" viewBox="0 0 15 15"><circle cx="7.5" cy="7.5" r="7" fill="#8ab4f8"/><path d="M3.2 3.4 Q5 5 4.4 7 Q6.4 8.6 6 11.2 Q8 9.5 7.2 7.5 Q5.8 6.6 6.6 4.8 Q8.6 4.6 8.6 2.4 Q6 1.5 3.2 3.4Z M10.5 8.5 Q12.5 9.6 11.2 12.6 Q13.8 10.6 13.6 8Z" fill="#44475e"/></svg>
<div class="t" style="left:1793.00px;top:116.12px;font-size:12.5px;line-height:12.5px;color:#e3e7f8;">Desconectar</div>
<svg style="position:absolute;left:1883px;top:118px;" width="12" height="8" viewBox="0 0 12 8"><path d="M1 6.5 L6 1.5 L11 6.5Z" fill="#e3e7f8"/></svg>
<svg style="position:absolute;left:1570px;top:151px;" width="18" height="17" viewBox="0 0 18 17"><path d="M1 4h15.5M1 14.5h15.5" stroke="#d5dbf5" stroke-width="1.2"/><circle cx="9.3" cy="4" r="2.3" fill="#d5dbf5"/><circle cx="3.3" cy="14.5" r="2.1" fill="#44475e" stroke="#d5dbf5" stroke-width="1.1"/></svg>
<div class="t" style="left:1594.00px;top:155.12px;font-size:12.5px;line-height:12.5px;color:#e3e7f8;">Configurar...</div>
<div style="position:absolute;left:1544px;top:179px;width:360px;height:1px;background:#51546b;"></div>
<div style="position:absolute;left:1544px;top:184px;width:180px;height:18px;background:#4a4d66;"></div>
<div style="position:absolute;left:1544px;top:202px;width:180px;height:2px;background:#6a6e87;"></div>
<div class="t" style="left:1633.50px;transform:translateX(-50%);top:189.22px;font-size:12.5px;line-height:12.5px;color:#e3e7f8;">Velocidad</div>
<div class="t" style="left:1814.00px;transform:translateX(-50%);top:189.22px;font-size:12.5px;line-height:12.5px;color:#e3e7f8;">Detalles</div>
<div class="t" style="left:1574.50px;transform:translateX(-50%);top:213.71px;font-size:10.5px;line-height:10.5px;color:#d0d4e6;">700,0 KiB/s</div>
<div style="position:absolute;left:1606px;top:218px;width:298px;height:1px;background:#656a8c;"></div>
<div class="t" style="left:1574.50px;transform:translateX(-50%);top:246.21px;font-size:10.5px;line-height:10.5px;color:#d0d4e6;">525,0 KiB/s</div>
<div style="position:absolute;left:1606px;top:250px;width:298px;height:1px;background:#656a8c;"></div>
<div class="t" style="left:1574.50px;transform:translateX(-50%);top:278.21px;font-size:10.5px;line-height:10.5px;color:#d0d4e6;">350,0 KiB/s</div>
<div style="position:absolute;left:1606px;top:282px;width:298px;height:1px;background:#656a8c;"></div>
<div class="t" style="left:1574.50px;transform:translateX(-50%);top:310.21px;font-size:10.5px;line-height:10.5px;color:#d0d4e6;">175,0 KiB/s</div>
<div style="position:absolute;left:1606px;top:314px;width:298px;height:1px;background:#656a8c;"></div>
<div class="t" style="left:1574.50px;transform:translateX(-50%);top:341.71px;font-size:10.5px;line-height:10.5px;color:#d0d4e6;">0 B/s</div>
<svg style="position:absolute;left:1606px;top:225px;" width="298" height="125" viewBox="0 0 298 125">
<path d="M139 121 Q150 118 158 115.5 L165 113.8 L168.6 116.5 L175.8 13 L183 116 L190.7 59 L196.8 121 L198.4 121 C201 80 203 22 206 8.3 C209.5 12 212 42 215 80 L221.7 121Z" fill="#ffffff" stroke="#86a6e6" stroke-width="1.1" stroke-linejoin="round"/>
<path d="M136 121 Q150 118.5 162 119 Q170 117.5 178 118.5 Q188 116.5 195 119.5 Q200 121 204 118 Q210 117 218 121" fill="none" stroke="#e0c090" stroke-width="0.9"/>
<path d="M0 121.2 H298" stroke="#d9b98e" stroke-width="0.9"/>
<path d="M118 120.6 Q124 119.5 130 120.6 M232 120.6 Q240 119.8 248 120.6" stroke="#d9b98e" stroke-width="0.8" fill="none"/>
<path d="M176 114 H196" stroke="#4a4e66" stroke-width="0.9" stroke-dasharray="1.6 1.6"/>
</svg>
<div style="position:absolute;left:19px;top:1024px;width:480px;height:48px;background:#1a1b26;border-radius:11px;box-shadow:0 2px 8px rgba(20,25,60,0.35);"></div>
<svg style="position:absolute;left:29px;top:1030px;" width="36" height="36" viewBox="0 0 36 36"><rect width="36" height="36" fill="#fbf6e6"/>
<g fill="#6a6660" opacity="0.75"><circle cx="22" cy="2.5" r="1.6"/><circle cx="25" cy="4.5" r="1.8"/><circle cx="27.5" cy="2" r="1.3"/><circle cx="24" cy="8" r="1.5"/><circle cx="27" cy="9.5" r="1.4"/><circle cx="20" cy="6.5" r="1"/><circle cx="29" cy="6.5" r="1"/><circle cx="2.5" cy="4" r="1.4"/><circle cx="4.5" cy="6" r="1.2"/><circle cx="2" cy="8" r="1"/></g>
<path d="M4.2 7.9 L6 6.2 L9.5 6.2 L13.7 9.3 L17.6 11.4 L23.6 15.7 L29.2 17.8 L29.9 20.2 L32.4 26.6 L32.4 29 L29.9 29 L25.7 25.9 L20.1 21.7 L13.7 17.8 L7.7 13.2 L4.6 10.7Z" fill="#050505"/>
<path d="M34.2 4.4 L36 3.5 L36 36 L30.6 36 L30.6 30.8 L32 27 L31.7 20.2 L33.5 15 L32.4 11.4Z" fill="#050505"/>
<g fill="#fbf6e6"><circle cx="34.5" cy="19.5" r="0.8"/><circle cx="34.8" cy="23.5" r="0.7"/><circle cx="33.5" cy="26.5" r="0.6"/><circle cx="25" cy="22.3" r="0.7"/></g>
<path d="M30 33.8 Q32 31.6 34.8 32.8 L35.2 34.3 L30 34.3Z" fill="#e39a48"/>
<path d="M4.2 1.2 H12" stroke="#e0a050" stroke-width="0.9"/>
<g fill="#2a2826"><circle cx="3" cy="34.5" r="0.9"/><circle cx="6.5" cy="35" r="0.8"/><circle cx="11" cy="35" r="0.9"/><circle cx="16" cy="35.2" r="0.7"/></g></svg>
<div class="t" style="left:76.00px;top:1034.92px;font-size:12.5px;line-height:12.5px;color:#e3e7f8;">Babe I'm Gonna Leave You - 1990 Remaster</div>
<div class="t" style="left:76.00px;top:1050.92px;font-size:12.5px;line-height:12.5px;color:#c0c5da;">Led Zeppelin / Led Zeppelin</div>
<svg style="position:absolute;left:397px;top:1044px;" width="8" height="8" viewBox="0 0 8 8"><rect x="0.5" y="0.6" width="1.6" height="6.6" fill="#d5dbf5"/><path d="M7.3 0.6 V7.2 L2.4 3.9Z" fill="#d5dbf5"/></svg>
<svg style="position:absolute;left:431px;top:1042px;" width="12" height="12" viewBox="0 0 12 12"><rect x="1" y="1" width="3.6" height="10.2" rx="1" fill="#d5dbf5"/><rect x="7.2" y="1" width="3.6" height="10.2" rx="1" fill="#d5dbf5"/></svg>
<svg style="position:absolute;left:469px;top:1044px;" width="8" height="8" viewBox="0 0 8 8"><rect x="5.6" y="0.6" width="1.6" height="6.6" fill="#d5dbf5"/><path d="M0.5 0.6 V7.2 L5.4 3.9Z" fill="#d5dbf5"/></svg>
<div style="position:absolute;left:628px;top:1024px;width:664px;height:48px;background:#1a1b26;border-radius:11px;box-shadow:0 2px 8px rgba(40,20,60,0.35);overflow:hidden;"><div style="position:absolute;left:60px;top:0;width:45px;height:48px;background:#383a4b;"></div><div style="position:absolute;left:60px;top:0;width:45px;height:3px;background:#4d5064;"></div><div style="position:absolute;left:60px;top:45px;width:45px;height:3px;background:#434659;"></div><div style="position:absolute;left:113px;top:0;width:46px;height:48px;background:#20212d;"></div><div style="position:absolute;left:384px;top:0;width:17px;height:48px;background:#1d4744;"></div><div style="position:absolute;left:384px;top:0;width:17px;height:3px;background:#6f5a8c;"></div><div style="position:absolute;left:384px;top:45px;width:17px;height:3px;background:#6f5a8c;"></div><div style="position:absolute;left:437px;top:0;width:46px;height:48px;background:#22232f;"></div><div style="position:absolute;left:600px;top:0;width:46px;height:48px;background:#2a2c3a;"></div><div style="position:absolute;left:600px;top:0;width:46px;height:3px;background:#4a4e62;"></div></div>
<svg style="position:absolute;left:638px;top:1033px;" width="37" height="30" viewBox="0 0 37 30"><rect x="0.5" y="0" width="36" height="30" rx="3.5" fill="#76787d"/><path d="M36.5 13 V26.5 Q36.5 30 33 30 H20Z" fill="#6b6d72"/><path d="M6 5 L14 9.3 L6 13.6" fill="none" stroke="#fff" stroke-width="1.3"/><path d="M10.5 16.5 H20.5" stroke="#fff" stroke-width="1.3"/></svg>
<svg style="position:absolute;left:691px;top:1035px;" width="39" height="31" viewBox="0 0 39 31"><defs><linearGradient id="dfg" x1="0" y1="0" x2="0" y2="1"><stop offset="0" stop-color="#a3cbf2"/><stop offset="1" stop-color="#80b0ea"/></linearGradient></defs>
<path d="M0.5 2 Q0.5 0.5 2 0.5 H17 L19.5 3 H38.5 V30.5 H0.5Z" fill="#7aa6dc"/>
<rect x="1.5" y="3.5" width="35" height="8" fill="#ffffff"/>
<path d="M0 10 H13.5 L16 7.5 H39 V30.5 H0Z" fill="url(#dfg)"/>
<path d="M0 10.5 H13.7 L16.2 8 H39" stroke="#bcdcf8" stroke-width="0.8" fill="none"/></svg>
<svg style="position:absolute;left:747px;top:1030px;" width="36" height="36" viewBox="0 0 36 36"><circle cx="17.8" cy="17.8" r="17.5" fill="#ef5b58"/><path d="M8.2 11.8 Q9.6 9.2 11.8 11 L17.6 21.2 L20.6 15.8 Q19.2 13.6 21 11.6 Q23.6 9.8 25.6 12 Q27 14 25.6 16.4 L19.8 26.4 Q18.2 28.6 16.2 26.6 L8.6 14.4 Q7.8 13 8.2 11.8Z" fill="#ffffff"/></svg>
<svg style="position:absolute;left:801px;top:1031px;" width="35" height="34" viewBox="0 0 35 34"><path d="M17.2 0.5 Q18.2 0.3 19 1 L32.5 15 Q34.2 17 32 18.2 L29.5 19 Q28 20 29.5 21 L31.5 21.6 Q33 22.5 31 23.5 L25 24.5 Q22.5 25.3 24.5 26.5 Q25.5 28 23 28.5 L21.8 29.2 Q23 30.5 20.5 31.8 Q17.5 33.5 15.2 31.5 Q14 30 15.5 29 Q16.5 28 14.5 27.5 L9 27 Q7 26.3 9 25 L10 24.2 Q11 23 9 22.6 L3.5 21.8 Q1 21.3 1.5 19.2 Q2 17.6 4 16.2Z" fill="#555555"/>
<ellipse cx="5" cy="27.6" rx="2.8" ry="1.1" fill="#555"/><ellipse cx="31" cy="23.6" rx="2.2" ry="1" fill="#555"/>
<path d="M10 9.2 L17.2 3.7 L23.8 9.8 L21.8 9 L19.6 11 L18.2 8.6 L15.2 11.3 L13.5 9.6Z" fill="#ffffff"/></svg>
<svg style="position:absolute;left:855px;top:1032px;" width="35" height="32" viewBox="0 0 35 32"><path d="M1 2.5 Q1.5 0 3.4 1.2 Q5 4.5 8 4.2 H26.5 Q29.5 4.5 31 1.2 Q33 0 33.5 2.5 L32.5 17 Q31.5 22.5 24 28 Q21 30.8 17.3 30.8 Q13.5 30.8 10.5 28 Q3.5 22.5 2 17Z" fill="#5c4f3f"/>
<circle cx="9.5" cy="15.5" r="3.1" fill="#d8d8d8"/><circle cx="24.5" cy="15.5" r="3.1" fill="#d8d8d8"/><circle cx="9.5" cy="16.2" r="1.4" fill="#222"/><circle cx="24.5" cy="16.2" r="1.4" fill="#222"/><circle cx="9" cy="14.5" r="1" fill="#fff"/><circle cx="24" cy="14.5" r="1" fill="#fff"/>
<ellipse cx="17.3" cy="28.6" rx="3.8" ry="2.3" fill="#1e1e1e"/></svg>
<svg style="position:absolute;left:909px;top:1030px;" width="36" height="36" viewBox="0 0 36 36"><circle cx="17" cy="17.7" r="17" fill="#353645"/><circle cx="17" cy="17.7" r="13.2" fill="#2d2f3e"/>
<path d="M17 9.5 Q21.6 13 21.2 17.5 Q20.6 20.6 18.2 21.4 L18.2 22.5 Q20.5 24 21.5 27 Q19 25 17 24.6 Q15 25 12.5 27 Q13.5 24 15.8 22.5 L15.8 21.4 Q13.4 20.6 12.8 17.5 Q12.4 13 17 9.5Z" fill="#1da391"/>
<g fill="none" stroke="#19897b" stroke-width="1.3" stroke-dasharray="2.2 0.9"><path d="M10.5 11 Q5.8 16.5 7.8 22.5 Q9.8 26.5 13 27.8"/><path d="M23.5 11 Q28.2 16.5 26.2 22.5 Q24.2 26.5 21 27.8"/></g></svg>
<svg style="position:absolute;left:963px;top:1030px;" width="36" height="36" viewBox="0 0 36 36"><circle cx="17.5" cy="17.9" r="17.5" fill="#2ec0f7"/>
<path d="M6.5 10.7 L13 9.8 L16.5 10.8 L18 7.2 L20.8 6.2 L19.3 8.8 L19.8 10.3 L28.2 8.6 L20.5 14.5 L17.5 19 L16 22.2 L28 23.4 L20.6 24.8 L22.8 30.3 L17 25.8 L11.5 23.8 L9.6 20.5 L9.5 17.5 L12 15 L14.2 13 L10 11.6Z" fill="#ffffff"/>
<circle cx="12.8" cy="19.4" r="2.6" fill="#2ec0f7"/></svg>
<svg style="position:absolute;left:1017px;top:1030px;" width="36" height="36" viewBox="0 0 36 36"><circle cx="17.4" cy="17.8" r="17.3" fill="#2ecfd0"/>
<path d="M1.5 15 Q9 12.5 17 16.5 Q25 20.5 34 15.5 M2 21 Q12 18 20 22 Q27 25 33 21" stroke="#6ddfe0" stroke-width="0.5" fill="none" opacity="0.6"/>
<path d="M13.6 26 V10.5 L25.6 8 V23" stroke="#ffffff" stroke-width="2.3" fill="none"/>
<ellipse cx="10.7" cy="26" rx="3.6" ry="3" fill="#fff"/><ellipse cx="22.4" cy="23.2" rx="3.6" ry="3" fill="#fff"/></svg>
<svg style="position:absolute;left:1034px;top:1029px;" width="20" height="20" viewBox="0 0 20 20"><circle cx="9.7" cy="9.8" r="9.2" fill="#1a1b26"/><circle cx="9.7" cy="9.8" r="8.2" fill="#292b39"/><path d="M10 1.6 A8.2 8.2 0 0 1 15.9 15.5 L13.6 8.2 Z" fill="#7b7e93"/></svg>
<svg style="position:absolute;left:1071px;top:1030px;" width="36" height="36" viewBox="0 0 36 36"><circle cx="17.5" cy="17.9" r="17.4" fill="#3fa849"/><circle cx="17.5" cy="17.9" r="15" fill="#3b9e45"/>
<path d="M8.5 13.5 Q17.5 10.5 27 15" stroke="#f1fae8" stroke-width="2.4" fill="none" stroke-linecap="round"/>
<path d="M9.5 18.5 Q17.5 16 25.5 19.5" stroke="#f1fae8" stroke-width="2" fill="none" stroke-linecap="round"/>
<path d="M10.5 23.2 Q17.5 21 24 23.8" stroke="#f1fae8" stroke-width="1.7" fill="none" stroke-linecap="round"/></svg>
<svg style="position:absolute;left:1069px;top:1029px;" width="20" height="20" viewBox="0 0 20 20"><circle cx="10" cy="9.6" r="9" fill="#1a1b26"/><circle cx="10" cy="9.6" r="8" fill="#272937"/><path d="M2.8 7.8 h2 l3.6 -3.3 v10.6 l-3.6 -3.3 h-2z" fill="#c8cce0"/><path d="M10.6 7.3 q1.2 2.3 0 4.6 M12.4 5.8 q2.2 3.8 0 7.6 M14.2 4.3 q3.2 5.3 0 10.6" stroke="#c8cce0" stroke-width="0.8" fill="none"/></svg>
<svg style="position:absolute;left:1125px;top:1030px;" width="36" height="36" viewBox="0 0 36 36"><circle cx="17.6" cy="17.9" r="17.1" fill="#565656"/><circle cx="17.6" cy="17.9" r="13.5" fill="#5e5e5e"/>
<circle cx="21.5" cy="13" r="4.3" fill="none" stroke="#eeeeee" stroke-width="1.6"/><circle cx="21.5" cy="13" r="1.6" fill="#eeeeee"/>
<path d="M19 16.5 L14.5 22.5 L7.2 19.8 Q5.6 19.6 6 21.2 L13.2 24.4 Q15 25.5 16.2 23.6Z" fill="#eeeeee"/><circle cx="13.8" cy="23.6" r="2.6" fill="#eeeeee"/></svg>
<svg style="position:absolute;left:1179px;top:1030px;" width="36" height="36" viewBox="0 0 36 36"><circle cx="17.6" cy="17.9" r="17" fill="#ffffff" opacity="0.95"/><circle cx="17.6" cy="17.9" r="15.6" fill="#2a8af2"/>
<g fill="none" stroke="#ffffff" stroke-width="1.4"><ellipse cx="12.3" cy="17" rx="4.3" ry="3.8"/><path d="M16.6 13.5 V28"/><ellipse cx="22.9" cy="17" rx="4.3" ry="3.8"/><path d="M18.6 7.8 V20.5"/></g></svg>
<svg style="position:absolute;left:1231px;top:1032px;" width="38" height="32" viewBox="0 0 38 32"><path d="M8 1.6 L37.4 10 L30.3 30.4 L1.8 20.6Z" fill="#f6b668" stroke="#f6b668" stroke-width="2.2" stroke-linejoin="round"/>
<rect x="2.8" y="4.5" width="33" height="22.8" rx="2.6" fill="#a55cf5"/>
<path d="M10.5 7.5 V20.5 H28.5 M8 11 H25.8 V24" stroke="#ffffff" stroke-width="1.2" fill="none"/></svg>
<div style="position:absolute;left:1460px;top:1024px;width:441px;height:47px;background:#1a1b26;border-radius:10px;box-shadow:0 2px 8px rgba(80,20,40,0.3);overflow:hidden;"></div>
<svg style="position:absolute;left:1460px;top:1024px;" width="441" height="47" viewBox="0 0 441 47"><rect x="14.00" y="36" width="5" height="8" fill="#c4f268"/><rect x="21.02" y="38" width="5" height="6" fill="#d8f268"/><rect x="28.03" y="41" width="5" height="3" fill="#ecf268"/><rect x="35.05" y="41" width="5" height="3" fill="#f2e568"/><rect x="42.06" y="42" width="5" height="2" fill="#f2d168"/><rect x="49.08" y="42" width="5" height="2" fill="#f2bd68"/><rect x="56.09" y="42" width="5" height="2" fill="#f2a968"/><rect x="63.11" y="42" width="5" height="2" fill="#f29568"/><rect x="70.12" y="42" width="5" height="2" fill="#f28168"/><rect x="77.13" y="42" width="5" height="2" fill="#f26d68"/><rect x="84.15" y="42" width="5" height="2" fill="#f26876"/><rect x="91.16" y="42" width="5" height="2" fill="#f2688a"/><rect x="98.18" y="39" width="5" height="5" fill="#f2689e"/><rect x="105.19" y="42" width="5" height="2" fill="#f268b2"/><rect x="112.21" y="40" width="5" height="4" fill="#f268c6"/><rect x="119.22" y="26" width="5" height="18" fill="#f268da"/><rect x="126.24" y="41" width="5" height="3" fill="#f268ed"/><rect x="133.26" y="40" width="5" height="4" fill="#e368f2"/><rect x="140.27" y="42" width="5" height="2" fill="#cf68f2"/><rect x="147.29" y="41" width="5" height="3" fill="#bb68f2"/><rect x="154.30" y="41" width="5" height="3" fill="#a768f2"/><rect x="161.32" y="40" width="5" height="4" fill="#9368f2"/><rect x="168.33" y="39" width="5" height="5" fill="#7f68f2"/><rect x="175.35" y="36" width="5" height="8" fill="#6c68f2"/><rect x="182.36" y="42" width="5" height="2" fill="#6877f2"/><rect x="189.38" y="42" width="5" height="2" fill="#688bf2"/><rect x="196.39" y="38" width="5" height="6" fill="#689ff2"/><rect x="203.40" y="41" width="5" height="3" fill="#68b3f2"/><rect x="210.42" y="35" width="5" height="9" fill="#68c7f2"/><rect x="217.43" y="42" width="5" height="2" fill="#68dbf2"/><rect x="224.45" y="42" width="5" height="2" fill="#68dbf2"/><rect x="231.46" y="32" width="5" height="12" fill="#68c7f2"/><rect x="238.48" y="42" width="5" height="2" fill="#68b3f2"/><rect x="245.49" y="39" width="5" height="5" fill="#689ff2"/><rect x="252.51" y="42" width="5" height="2" fill="#688bf2"/><rect x="259.53" y="42" width="5" height="2" fill="#6877f2"/><rect x="266.54" y="38" width="5" height="6" fill="#6c68f2"/><rect x="273.56" y="40" width="5" height="4" fill="#7f68f2"/><rect x="280.57" y="40" width="5" height="4" fill="#9368f2"/><rect x="287.59" y="41" width="5" height="3" fill="#a768f2"/><rect x="294.60" y="42" width="5" height="2" fill="#bb68f2"/><rect x="301.62" y="42" width="5" height="2" fill="#cf68f2"/><rect x="308.63" y="41" width="5" height="3" fill="#e368f2"/><rect x="315.64" y="41" width="5" height="3" fill="#f268ed"/><rect x="322.66" y="29" width="5" height="15" fill="#f268da"/><rect x="329.67" y="41" width="5" height="3" fill="#f268c6"/><rect x="336.69" y="42" width="5" height="2" fill="#f268b2"/><rect x="343.70" y="40" width="5" height="4" fill="#f2689e"/><rect x="350.72" y="42" width="5" height="2" fill="#f2688a"/><rect x="357.73" y="42" width="5" height="2" fill="#f26876"/><rect x="364.75" y="42" width="5" height="2" fill="#f26d68"/><rect x="371.76" y="42" width="5" height="2" fill="#f28168"/><rect x="378.78" y="42" width="5" height="2" fill="#f29568"/><rect x="385.80" y="42" width="5" height="2" fill="#f2a968"/><rect x="392.81" y="42" width="5" height="2" fill="#f2bd68"/><rect x="399.83" y="42" width="5" height="2" fill="#f2d168"/><rect x="406.84" y="42" width="5" height="2" fill="#f2e568"/><rect x="413.86" y="42" width="5" height="2" fill="#ecf268"/><rect x="420.87" y="39" width="5" height="5" fill="#d8f268"/><rect x="427.88" y="37" width="5" height="7" fill="#c4f268"/><rect x="9.5" y="42" width="2.5" height="2" fill="#c4f268"/><rect x="435" y="42" width="2.5" height="2" fill="#c4f268"/></svg>
</body></html>
